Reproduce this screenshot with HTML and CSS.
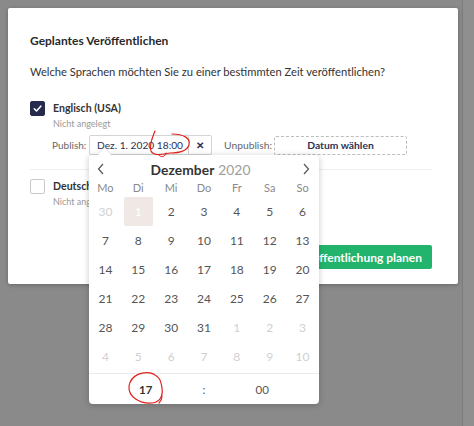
FILE: index.html
```html
<!DOCTYPE html>
<html lang="de">
<head>
<meta charset="utf-8">
<title>Geplantes Veröffentlichen</title>
<link rel="stylesheet" href="styles.css">
</head>
<body>
<div class="side"></div>
<div class="modal">
  <h1 class="title">Geplantes Veröffentlichen</h1>
  <p class="question">Welche Sprachen möchten Sie zu einer bestimmten Zeit veröffentlichen?</p>

  <div class="lang">
    <div class="lang-head">
      <span class="check checked"><svg viewBox="0 0 15 15" width="15" height="15"><path d="M4.3 7.8 L6.5 10 L10.8 5.2" fill="none" stroke="#fff" stroke-width="1.6" stroke-linecap="round" stroke-linejoin="round"/></svg></span>
      <span class="lang-name">Englisch (USA)</span>
    </div>
    <div class="lang-sub">Nicht angelegt</div>
    <div class="dates">
      <span class="dlabel">Publish:</span>
      <div class="dinput">
        <span class="dvalue">Dez. 1. 2020 18:00</span>
        <span class="dclear">✕</span>
      </div>
      <span class="dlabel unpub">Unpublish:</span>
      <div class="dpick">Datum wählen</div>
    </div>
  </div>

  <hr class="sep">

  <div class="lang">
    <div class="lang-head">
      <span class="check"></span>
      <span class="lang-name">Deutsch</span>
    </div>
    <div class="lang-sub">Nicht angelegt</div>
  </div>

  <div class="footer">
    <button class="btn-primary">Veröffentlichung planen</button>
  </div>
</div>

<div class="cal">
  <span class="cal-tip"></span>
  <div class="cal-head">
    <svg class="chev" viewBox="0 0 8 12" width="8" height="12"><path d="M6 1 L1.5 6 L6 11" fill="none" stroke="#555" stroke-width="1.2"/></svg>
    <div class="cal-title"><b>Dezember</b> <span>2020</span></div>
    <svg class="chev" viewBox="0 0 8 12" width="8" height="12"><path d="M2 1 L6.5 6 L2 11" fill="none" stroke="#555" stroke-width="1.2"/></svg>
  </div>
  <div class="cal-week">
    <span>Mo</span><span>Di</span><span>Mi</span><span>Do</span><span>Fr</span><span>Sa</span><span>So</span>
  </div>
  <div class="cal-days">
    <span class="o">30</span><span class="sel"><i>1</i></span><span>2</span><span>3</span><span>4</span><span>5</span><span>6</span>
    <span>7</span><span>8</span><span>9</span><span>10</span><span>11</span><span>12</span><span>13</span>
    <span>14</span><span>15</span><span>16</span><span>17</span><span>18</span><span>19</span><span>20</span>
    <span>21</span><span>22</span><span>23</span><span>24</span><span>25</span><span>26</span><span>27</span>
    <span>28</span><span>29</span><span>30</span><span>31</span><span class="o">1</span><span class="o">2</span><span class="o">3</span>
    <span class="o">4</span><span class="o">5</span><span class="o">6</span><span class="o">7</span><span class="o">8</span><span class="o">9</span><span class="o">10</span>
  </div>
  <div class="cal-time">
    <span class="hh">17</span><span class="colon">:</span><span class="mm">00</span>
  </div>
</div>

<svg class="marks" viewBox="0 0 474 426" width="474" height="426">
  <path d="M155 131 C152 138 149 146 151 151 C154 157 164 154 170 153 C178 153 187 151 189 145 C191 138 183 134 172 134" fill="none" stroke="#e0201c" stroke-width="1.2" stroke-linecap="round"/>
  <path d="M159 155 C161 158 165 157 166 153" fill="none" stroke="#e0201c" stroke-width="1" stroke-linecap="round"/>
  <path d="M154 374 C143 370 131 375 129 386 C128 397 140 404 152 403 C161 402 163 395 162 388 C161 381 160 376 150 373" fill="none" stroke="#e0201c" stroke-width="1.2" stroke-linecap="round"/>
  <path d="M162 396 C162 399 161 401 159 403" fill="none" stroke="#e0201c" stroke-width="1.2" stroke-linecap="round"/>
</svg>
</body>
</html>
```
FILE: styles.css
```css
* { box-sizing: border-box; }

body {
  margin: 0;
  width: 474px;
  height: 426px;
  overflow: hidden;
  position: relative;
  background: #8b8a8b;
  padding: 8px 0 0 8px;
  font-family: Lato, "Open Sans", "Liberation Sans", sans-serif;
  color: #333;
}

.side {
  position: absolute;
  left: 462px;
  top: 0;
  width: 12px;
  height: 426px;
  background: #8f8f8f;
  border-left: 1px solid #7c7c7c;
}

.modal {
  position: relative;
  width: 450px;
  height: 276px;
  background: #fff;
  border-radius: 2px;
  box-shadow: 0 1px 4px rgba(0,0,0,0.25);
  padding: 24px 26px 0 22px;
}

.title {
  margin: 0;
  font-size: 12px;
  line-height: 18px;
  font-weight: 700;
  color: #2a2a2a;
}

.question {
  margin: 13px 0 0;
  font-size: 11.2px;
  line-height: 18px;
  color: #333;
}

.lang { margin-top: 19px; }

.lang-head {
  display: flex;
  align-items: center;
  gap: 8px;
  height: 16px;
}

.check {
  width: 15px;
  height: 15px;
  border-radius: 2px;
  border: 1px solid #c9c9c9;
  background: #fff;
  display: block;
}
.check.checked {
  background: #262a4f;
  border-color: #262a4f;
}
.check svg { display: block; margin: -1px; }

.lang-name {
  font-size: 10.6px;
  font-weight: 700;
  color: #333;
  line-height: 16px;
}

.lang-sub {
  margin: 1px 0 0 23px;
  font-size: 9px;
  line-height: 14px;
  color: #9a9a9a;
}

.dates {
  display: flex;
  align-items: center;
  margin: 4px 0 0 22px;
  height: 20px;
}

.dlabel {
  font-size: 10px;
  color: #666;
  width: 37px;
}
.dlabel.unpub { width: 50px; margin-left: 12px; font-size: 10.3px; }

.dinput {
  display: flex;
  width: 123px;
  height: 20px;
  border: 1px solid #d4d4d4;
  border-radius: 2px;
}
.dvalue {
  flex: 1;
  padding-left: 7px;
  font-size: 10.2px;
  line-height: 18px;
  color: #2e3152;
  white-space: nowrap;
}
.dclear {
  width: 23px;
  border-left: 1px solid #d4d4d4;
  text-align: center;
  font-size: 10px;
  font-weight: 700;
  line-height: 18px;
  color: #2e3152;
}

.dpick {
  width: 133px;
  height: 19px;
  border: 1px dashed #bdbdbd;
  border-radius: 2px;
  text-align: center;
  font-size: 10.3px;
  font-weight: 700;
  line-height: 17px;
  color: #2e3152;
}

.sep {
  margin: 14px 0 0;
  border: 0;
  border-top: 1px solid #eeeeee;
}

.sep + .lang { margin-top: 8px; }

.footer {
  display: flex;
  justify-content: flex-end;
  margin-top: 36px;
}

.btn-primary {
  height: 24px;
  padding: 0 10px;
  border: 0;
  border-radius: 2px;
  background: #22b46c;
  color: #fff;
  font-family: inherit;
  font-size: 12px;
  font-weight: 700;
}

/* calendar popup */
.cal {
  position: absolute;
  left: 89px;
  top: 155px;
  width: 230px;
  background: #fff;
  border-radius: 4px;
  box-shadow: 0 1px 6px rgba(0,0,0,0.22);
  padding-top: 2px;
}

.cal-tip {
  position: absolute;
  left: 11px;
  top: -5px;
  width: 9px;
  height: 9px;
  background: #fff;
  transform: rotate(45deg);
  box-shadow: -1px -1px 2px rgba(0,0,0,0.08);
}

.cal-head {
  position: relative;
  display: flex;
  justify-content: space-between;
  align-items: center;
  height: 24px;
  padding: 0 9px 0 8px;
}

.cal-title {
  font-size: 13.8px;
  color: #333;
  letter-spacing: 0.1px;
  margin-right: 6px;
}
.cal-title b { font-weight: 700; }
.cal-title span { color: #9e9e9e; font-weight: 400; }

.cal-week, .cal-days {
  display: grid;
  grid-template-columns: repeat(7, 1fr);
  text-align: center;
}

.cal-week {
  height: 14px;
  font-size: 11px;
  line-height: 14px;
  color: #8a8a8a;
}

.cal-days {
  margin-top: 2px;
  grid-auto-rows: 29px;
  font-size: 12px;
  color: #555;
}
.cal-days span {
  display: flex;
  align-items: center;
  justify-content: center;
}
.cal-days .o { color: #d0d0d0; }
.cal-days .sel i {
  font-style: normal;
  width: 29px;
  height: 29px;
  line-height: 29px;
  border-radius: 2px;
  background: #efe8e4;
  color: #fff;
}

.cal-time {
  margin-top: 2px;
  border-top: 1px solid #ebebeb;
  height: 31px;
  display: grid;
  grid-template-columns: 1fr auto 1fr;
  align-items: center;
  text-align: center;
  font-size: 11.5px;
  color: #555;
}
.cal-time .hh { color: #333; font-weight: 700; }

.marks {
  position: absolute;
  left: 0;
  top: 0;
  pointer-events: none;
}
```
